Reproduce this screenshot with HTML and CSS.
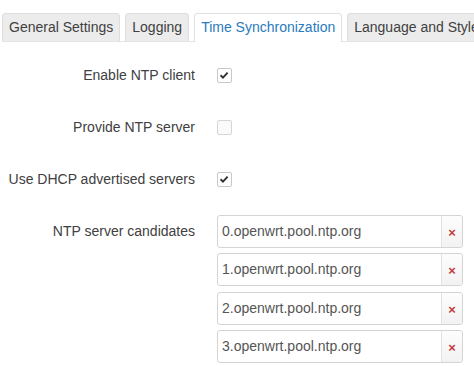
FILE: index.html
```html
<!DOCTYPE html>
<html lang="en">
<head>
  <meta charset="UTF-8" />
  <title>System - Time Synchronization</title>
  <link rel="stylesheet" href="styles.css">
</head>
<body>
  <div class="page">
    <h2 class="page-title">System Properties</h2>

    <!-- tabs -->
    <ul class="tabs">
      <li class="tab">General Settings</li>
      <li class="tab">Logging</li>
      <li class="tab active">Time Synchronization</li>
      <li class="tab">Language and Style</li>
    </ul>

    <!-- ntp settings -->
    <div class="form">
      <div class="row">
        <label class="row-label">Enable NTP client</label>
        <div class="row-field">
          <span class="check checked">
            <svg viewBox="0 0 14 14" width="14" height="14"><path d="M3.5 7.2 L6 9.6 L10.6 4.6" fill="none" stroke="#333" stroke-width="1.9"/></svg>
          </span>
        </div>
      </div>

      <div class="row">
        <label class="row-label">Provide NTP server</label>
        <div class="row-field">
          <span class="check"></span>
        </div>
      </div>

      <div class="row">
        <label class="row-label">Use DHCP advertised servers</label>
        <div class="row-field">
          <span class="check checked">
            <svg viewBox="0 0 14 14" width="14" height="14"><path d="M3.5 7.2 L6 9.6 L10.6 4.6" fill="none" stroke="#333" stroke-width="1.9"/></svg>
          </span>
        </div>
      </div>

      <div class="row row-list">
        <label class="row-label">NTP server candidates</label>
        <div class="row-field dynlist">
          <div class="dyn-item"><span class="dyn-value">0.openwrt.pool.ntp.org</span><span class="dyn-remove">&times;</span></div>
          <div class="dyn-item"><span class="dyn-value">1.openwrt.pool.ntp.org</span><span class="dyn-remove">&times;</span></div>
          <div class="dyn-item"><span class="dyn-value">2.openwrt.pool.ntp.org</span><span class="dyn-remove">&times;</span></div>
          <div class="dyn-item"><span class="dyn-value">3.openwrt.pool.ntp.org</span><span class="dyn-remove">&times;</span></div>
        </div>
      </div>
    </div>
  </div>
</body>
</html>
```

FILE: styles.css
```css
/* base */
body {
  margin: 0;
  font-family: 'Liberation Sans', Arial, sans-serif;
  font-size: 14px;
  color: #404040;
  background: #fff;
  overflow: hidden;
}

.page {
  padding-left: 2px;
}

.page-title {
  font-size: 20px;
  font-weight: normal;
  line-height: 24px;
  margin: -23px 0 12px 0;
  color: #555;
}

/* tabs */
.tabs {
  list-style: none;
  margin: 0;
  padding: 0;
  display: flex;
  white-space: nowrap;
  border-bottom: 1px solid #e4e4e4;
}

.tab {
  height: 27px;
  line-height: 27px;
  padding: 0 6px;
  margin-right: 5px;
  margin-bottom: -1px;
  border: 1px solid #ddd;
  border-bottom: none;
  border-radius: 4px 4px 0 0;
  background-color: #ececec;
  color: #404040;
  flex-shrink: 0;
}

.tab.active {
  background-color: #fff;
  color: #2a7bbd;
  border-color: #e0e0e0;
  height: 28px;
}

/* form rows */
.form {
  padding-top: 16px;
}

.row {
  display: flex;
  align-items: center;
  height: 34px;
  margin-bottom: 18px;
}

.row-list {
  align-items: flex-start;
  height: auto;
}

.row-label {
  width: 193px;
  text-align: right;
  color: #404040;
  line-height: 34px;
}

.row-field {
  margin-left: 22px;
  display: flex;
  align-items: center;
}

/* checkbox */
.check {
  display: block;
  width: 13px;
  height: 13px;
  border: 1px solid #d6d6d6;
  border-radius: 2px;
  background-color: #fafafa;
}

.check svg {
  display: block;
  margin: -1px 0 0 -1px;
}

.check.checked {
  background-color: #fff;
  border-color: #c8c8c8;
}

/* dynamic list */
.dynlist {
  flex-direction: column;
  align-items: stretch;
  width: 246px;
  margin-top: 1px;
}

.dyn-item {
  display: flex;
  height: 31px;
  border: 1px solid #d4d4d4;
  border-radius: 3px;
  margin-bottom: 5.3px;
  background: #fff;
}

.dyn-value {
  flex: 1;
  padding-left: 4px;
  line-height: 31px;
  color: #555;
}

.dyn-remove {
  width: 20px;
  border-left: 1px solid #e2e2e2;
  background: linear-gradient(#fdfdfd, #f2f2f2);
  border-radius: 0 3px 3px 0;
  text-align: center;
  line-height: 33px;
  font-size: 13px;
  font-weight: bold;
  color: #c23b3b;
}
```
